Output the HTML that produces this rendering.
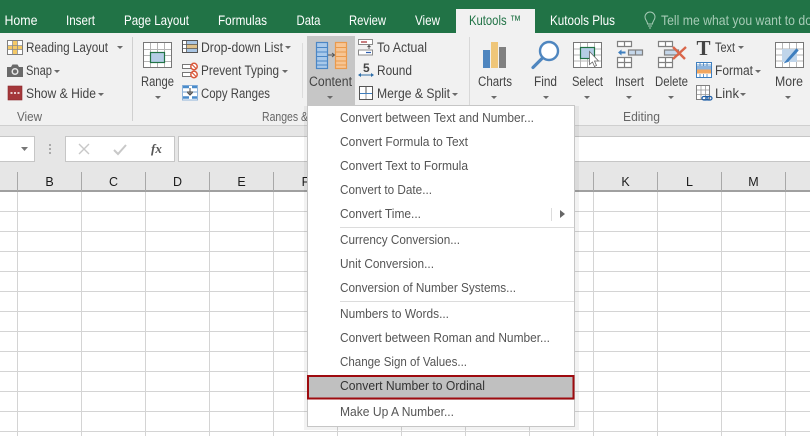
<!DOCTYPE html>
<html><head><meta charset="utf-8"><style>
html,body{margin:0;padding:0;background:#fff}
svg{display:block;font-family:"Liberation Sans",sans-serif}
.t{font-size:14px;fill:#fff}
.r{font-size:13.5px;fill:#444}
.g{font-size:13px;fill:#666}
.m{font-size:12.5px;fill:#555}
.h{font-size:12.5px;fill:#1c1c1c;text-anchor:middle}
</style></head><body>
<svg xmlns="http://www.w3.org/2000/svg" width="810" height="436" viewBox="0 0 810 436">
<rect width="810" height="436" fill="#fff"/>
<!-- title/tab bar -->
<rect width="810" height="33" fill="#217346"/>
<rect x="456" y="9" width="79" height="24" fill="#f1f1f1"/>
<text class="t" x="4.500" y="25" textLength="33" lengthAdjust="spacingAndGlyphs">Home</text>
<text class="t" x="66" y="25" textLength="29" lengthAdjust="spacingAndGlyphs">Insert</text>
<text class="t" x="124" y="25" textLength="65" lengthAdjust="spacingAndGlyphs">Page Layout</text>
<text class="t" x="218" y="25" textLength="49" lengthAdjust="spacingAndGlyphs">Formulas</text>
<text class="t" x="296.500" y="25" textLength="24" lengthAdjust="spacingAndGlyphs">Data</text>
<text class="t" x="349" y="25" textLength="37" lengthAdjust="spacingAndGlyphs">Review</text>
<text class="t" x="415" y="25" textLength="25" lengthAdjust="spacingAndGlyphs">View</text>
<text class="t" x="469" y="25" textLength="52" lengthAdjust="spacingAndGlyphs" style="fill:#217346">Kutools ™</text>
<text class="t" x="550" y="25" textLength="65" lengthAdjust="spacingAndGlyphs">Kutools Plus</text>
<text class="t" x="661" y="25" textLength="151" lengthAdjust="spacingAndGlyphs" style="fill:#a6cbb6">Tell me what you want to do</text>
<path d="M647.500 24c0-3-2.500-4-2.500-7a5 5 0 0 1 10 0c0 3-2.500 4-2.500 7zM648 26h4M649 28h2" fill="none" stroke="#a6cbb6" stroke-width="1"/>
<!-- ribbon -->
<rect y="33" width="810" height="92" fill="#f1f1f1"/>
<rect y="125" width="810" height="1" fill="#cfcfcf"/>
<rect x="132" y="37" width="1" height="84" fill="#d0d0d0"/>
<rect x="302" y="43" width="1" height="55" fill="#dcdcdc"/>
<rect x="469" y="37" width="1" height="68" fill="#d8d8d8"/>
<rect x="307" y="36" width="48" height="69" fill="#c6c6c6"/>
<!-- reading layout icon -->
<rect x="7.500" y="40.500" width="15" height="14" fill="#fff" stroke="#7f7f7f"/>
<rect x="13" y="41" width="4" height="13" fill="#f5c966"/><rect x="8" y="46" width="14" height="3.500" fill="#f5c966"/>
<path d="M12.500 41v13M17.500 41v13M8 45.500h14M8 49.500h14" stroke="#8a8a8a" stroke-width=".8" fill="none"/>
<!-- snap icon -->
<path d="M7 67h4l1.500-2.500h5L19 67h4v10H7z" fill="#6a6a6a"/><circle cx="15" cy="71.500" r="3.500" fill="#e8e8e8"/><circle cx="15" cy="71.500" r="2" fill="#6a6a6a"/>
<!-- show hide icon -->
<rect x="8" y="86" width="14" height="14" fill="#a4373a" stroke="#8c2a2d" stroke-width=".6"/>
<path d="M10.500 93h2M14 93h2M17.500 93h2" stroke="#fff" stroke-width="1.400"/>
<!-- range icon -->
<rect x="143.500" y="42.500" width="28" height="25" fill="#fff" stroke="#777"/>
<path d="M150.500 43v24M157.500 43v24M164.500 43v24M144 49.500h27M144 55.500h27M144 61.500h27" stroke="#b5b5b5" fill="none"/>
<rect x="150.500" y="52.500" width="14" height="10" fill="#b5cde6" stroke="#217346" stroke-width="1.200"/>
<!-- dropdown list -->
<rect x="182.500" y="40.500" width="15" height="12" fill="#fff" stroke="#555"/>
<rect x="187" y="44" width="10" height="5" fill="#dfc18b"/><rect x="187" y="41" width="10" height="3" fill="#a9c5e3"/><rect x="187" y="49" width="10" height="3" fill="#a9c5e3"/>
<path d="M186.500 41v11M183 44.500h14M183 48.500h14" stroke="#555" stroke-width=".8"/>
<!-- prevent typing -->
<rect x="182.500" y="64.500" width="13" height="4" fill="#fff" stroke="#777"/><rect x="182.500" y="72.500" width="13" height="4" fill="#fff" stroke="#777"/>
<circle cx="194" cy="66.500" r="3.200" fill="#fff" stroke="#d9583b" stroke-width="1.500"/><circle cx="194" cy="74.500" r="3.200" fill="#fff" stroke="#d9583b" stroke-width="1.500"/>
<path d="M192 64.500l4 4M192 72.500l4 4" stroke="#d9583b" stroke-width="1.200"/>
<!-- copy ranges -->
<rect x="182.500" y="85.500" width="15" height="14.500" fill="#fff" stroke="#8fb3d9"/>
<path d="M183 87h6M192 87h5M183 97.500h6M192 97.500h5" stroke="#4a8ccb" stroke-width="2.500"/>
<path d="M183 92h4M193 92h4" stroke="#b9cfe6" stroke-width="2"/>
<path d="M190 88v6M187.500 92.500l2.500 2.500 2.500-2.500M187 92h6" stroke="#444" fill="none"/>
<!-- content -->
<rect x="316.500" y="42.500" width="11" height="26" fill="#a9c9ea" stroke="#4a86c5" stroke-width="1.200"/>
<path d="M317 47.500h10M317 52h10M317 56.500h10M317 61h10M317 65h10" stroke="#4a86c5"/>
<rect x="335.500" y="42.500" width="11" height="26" fill="#f7c593" stroke="#ea9a4c" stroke-width="1.200"/>
<path d="M336 47.500h10M336 52h10M336 56.500h10M336 61h10M336 65h10" stroke="#ea9a4c"/>
<path d="M328 55h6M332 53l2.500 2-2.500 2" stroke="#555" fill="none"/>
<!-- to actual -->
<rect x="358.500" y="39.500" width="14" height="5" fill="#fff" stroke="#8a8a8a"/><path d="M361 42h6" stroke="#a4282c" stroke-width="1.200"/>
<rect x="358.500" y="50" width="14" height="5" fill="#fff" stroke="#8a8a8a"/><path d="M366 52.500h5" stroke="#2f5fb0" stroke-width="1.200"/>
<path d="M369 49v-3M367.500 47l1.500-1.500 1.500 1.500" stroke="#333" fill="none" stroke-width=".8"/>
<!-- round -->
<text x="363" y="72" style="font-size:12px;font-weight:bold;fill:#444">5</text>
<path d="M359 75h14" stroke="#2f6ea8" stroke-width="1"/><path d="M358 75l3-2v4zM374 75l-3-2v4z" fill="#2f6ea8"/>
<!-- merge -->
<rect x="359.500" y="86.500" width="13" height="13" fill="#fff" stroke="#555"/><path d="M366 87v6" stroke="#555"/><path d="M366 94v5" stroke="#9b9b9b"/><path d="M360 93.500h12" stroke="#3f7fbf"/>
<!-- charts -->
<rect x="483" y="50" width="7" height="18" fill="#4f86bf"/><rect x="491" y="42" width="7" height="26" fill="#efc679"/><rect x="499" y="47" width="7" height="21" fill="#808080"/>
<!-- find -->
<circle cx="549" cy="51" r="9" fill="#fff" stroke="#4f86bf" stroke-width="2.400"/>
<path d="M542.500 58L533 67.500" stroke="#4f86bf" stroke-width="3.200" stroke-linecap="round"/>
<!-- select -->
<rect x="573.500" y="42.500" width="28" height="25" fill="#fff" stroke="#777"/>
<path d="M580.500 43v24M587.500 43v24M594.500 43v24M574 49h27M574 55h27M574 61h27" stroke="#b5b5b5" fill="none"/>
<rect x="580.500" y="47.500" width="14" height="11" fill="#b5cde6" stroke="#217346" stroke-width="1.200"/>
<path d="M589.500 51.500v13l3-2.500 2 4.500 2-1-2-4.500h4z" fill="#fff" stroke="#666" stroke-width=".8"/>
<!-- insert -->
<g fill="#fff" stroke="#808080" stroke-width="1.200"><path d="M617.500 41.500h14v5h-14zM624.500 41.500v5M617.500 57.500h14v10h-14zM617.500 62.500h14M624.500 57.500v10"/><path d="M628.500 50h14v5h-14z" fill="#c5d7ea"/><path d="M635.500 50v5"/></g>
<path d="M618 52.500l3.500-3v2h4v2h-4v2z" fill="#3f7fbf"/>
<!-- delete -->
<g fill="#fff" stroke="#808080" stroke-width="1.200"><path d="M658.500 41.500h14v5h-14zM665.500 41.500v5M658.500 57.500h14v10h-14zM658.500 62.500h14M665.500 57.500v10"/><path d="M664.500 50h14v5h-14z" fill="#c5d7ea"/></g>
<path d="M673 47l12 12M686 47l-13 12" stroke="#d9664a" stroke-width="2.400" fill="none"/>
<!-- T -->
<text x="696.500" y="55" style="font-family:'Liberation Serif',serif;font-size:21px;font-weight:bold;fill:#444">T</text>
<!-- format -->
<rect x="696.500" y="62.500" width="15" height="15" fill="#fff" stroke="#3f7fbf"/>
<rect x="697" y="66" width="14" height="3.500" fill="#8db4dd"/><rect x="697" y="69.500" width="14" height="4" fill="#f2a65e"/>
<path d="M697 65h14M700 63v3M703.500 63v3M707 63v3M700 74v3M703.500 74v3M707 74v3" stroke="#3f7fbf" stroke-width=".8"/>
<!-- link -->
<rect x="696.500" y="85.500" width="13" height="14" fill="#fff" stroke="#808080"/><path d="M701 86v13M705.500 86v13M697 90h12M697 94.500h12" stroke="#999" stroke-width=".8"/>
<rect x="702" y="96.500" width="6" height="3.500" rx="1.700" fill="none" stroke="#1f5fa8" stroke-width="1.200"/><rect x="706" y="96.500" width="6" height="3.500" rx="1.700" fill="none" stroke="#1f5fa8" stroke-width="1.200"/>
<!-- more -->
<rect x="775.500" y="42.500" width="28" height="25" fill="#fff" stroke="#777"/>
<path d="M782.500 43v24M789.500 43v24M796.500 43v24M776 49h27M776 55h27M776 61h27" stroke="#b5b5b5" fill="none"/>
<rect x="782" y="49" width="15" height="13" fill="#c0d5ea"/>
<path d="M787 60l-2 2.500 3-1 10-11-1.500-1.500z" fill="#3f7fbf" stroke="#3f7fbf"/>
<!-- arrows -->
<path fill="#6a6a6a" d="M117 46h6l-3 3zM54 70h6l-3 3zM98 93h6l-3 3zM155 96h6l-3 3zM285 46h6l-3 3zM282 70h6l-3 3zM327 96h6l-3 3zM452 93h6l-3 3zM491 96h6l-3 3zM543 96h6l-3 3zM584 96h6l-3 3zM626 96h6l-3 3zM668 96h6l-3 3zM738 46h6l-3 3zM755 70h6l-3 3zM740 93h6l-3 3zM785 96h6l-3 3z"/>
<!-- ribbon labels -->
<text class="r" x="26" y="52" textLength="82" lengthAdjust="spacingAndGlyphs">Reading Layout</text>
<text class="r" x="26" y="75" textLength="26" lengthAdjust="spacingAndGlyphs">Snap</text>
<text class="r" x="26" y="98" textLength="70" lengthAdjust="spacingAndGlyphs">Show &amp; Hide</text>
<text class="g" x="17" y="121" textLength="25" lengthAdjust="spacingAndGlyphs">View</text>
<text class="r" x="141" y="86" textLength="33" lengthAdjust="spacingAndGlyphs">Range</text>
<text class="r" x="201" y="52" textLength="82" lengthAdjust="spacingAndGlyphs">Drop-down List</text>
<text class="r" x="201" y="75" textLength="78" lengthAdjust="spacingAndGlyphs">Prevent Typing</text>
<text class="r" x="201" y="98" textLength="69" lengthAdjust="spacingAndGlyphs">Copy Ranges</text>
<text class="g" x="262" y="121" textLength="46" lengthAdjust="spacingAndGlyphs">Ranges &amp;</text>
<text class="r" x="309" y="86" textLength="43" lengthAdjust="spacingAndGlyphs">Content</text>
<text class="r" x="377" y="52" textLength="50" lengthAdjust="spacingAndGlyphs">To Actual</text>
<text class="r" x="377" y="75" textLength="35" lengthAdjust="spacingAndGlyphs">Round</text>
<text class="r" x="377" y="98" textLength="73" lengthAdjust="spacingAndGlyphs">Merge &amp; Split</text>
<text class="r" x="478" y="86" textLength="34" lengthAdjust="spacingAndGlyphs">Charts</text>
<text class="r" x="534" y="86" textLength="23" lengthAdjust="spacingAndGlyphs">Find</text>
<text class="r" x="572" y="86" textLength="31" lengthAdjust="spacingAndGlyphs">Select</text>
<text class="r" x="615" y="86" textLength="29" lengthAdjust="spacingAndGlyphs">Insert</text>
<text class="r" x="655" y="86" textLength="33" lengthAdjust="spacingAndGlyphs">Delete</text>
<text class="r" x="715" y="52" textLength="20" lengthAdjust="spacingAndGlyphs">Text</text>
<text class="r" x="715" y="75" textLength="38" lengthAdjust="spacingAndGlyphs">Format</text>
<text class="r" x="715" y="98" textLength="24" lengthAdjust="spacingAndGlyphs">Link</text>
<text class="r" x="775" y="86" textLength="28" lengthAdjust="spacingAndGlyphs">More</text>
<text class="g" x="623" y="121" textLength="37" lengthAdjust="spacingAndGlyphs">Editing</text>
<!-- formula bar -->
<rect y="126" width="810" height="36" fill="#e6e6e6"/>
<rect x="-2" y="136.500" width="36.500" height="25" fill="#fff" stroke="#c6c6c6"/>
<path d="M21 147h7l-3.500 4z" fill="#777"/>
<path d="M50 144v2M50 148v2M50 152v2" stroke="#aaa" stroke-width="2"/>
<rect x="65.500" y="136.500" width="109" height="25" fill="#fff" stroke="#c6c6c6"/>
<rect x="178.500" y="136.500" width="640" height="25" fill="#fff" stroke="#c6c6c6"/>
<path d="M79 144l10 10M89 144l-10 10" stroke="#c8c8c8" stroke-width="1.400"/>
<path d="M114 150l4 4 8-9" stroke="#c8c8c8" stroke-width="2" fill="none"/>
<text x="151" y="153" style="font-family:'Liberation Serif',serif;font-style:italic;font-weight:bold;font-size:13px;fill:#555">fx</text>
<!-- column headers -->
<rect y="162" width="810" height="29" fill="#e6e6e6"/>
<rect y="190" width="810" height="2" fill="#a0a0a0"/>
<path d="M17.500 172v19M81.500 172v19M145.500 172v19M209.500 172v19M273.500 172v19M337.500 172v19M593.500 172v19M657.500 172v19M721.500 172v19M785.500 172v19" stroke="#a8a8a8"/>
<text class="h" x="49.500" y="186">B</text><text class="h" x="113.500" y="186">C</text><text class="h" x="177.500" y="186">D</text><text class="h" x="241.500" y="186">E</text><text class="h" x="305.500" y="186">F</text><text class="h" x="625.500" y="186">K</text><text class="h" x="689.500" y="186">L</text><text class="h" x="753.500" y="186">M</text>
<!-- grid -->
<path d="M17.500 192V436M81.500 192V436M145.500 192V436M209.500 192V436M273.500 192V436M337.500 192V436M401.500 192V436M465.500 192V436M529.500 192V436M593.500 192V436M657.500 192V436M721.500 192V436M785.500 192V436M0 211.500H810M0 231.500H810M0 251.500H810M0 271.500H810M0 291.500H810M0 311.500H810M0 331.500H810M0 351.500H810M0 371.500H810M0 391.500H810M0 411.500H810M0 431.500H810" stroke="#d4d4d4" fill="none"/>
<!-- menu -->
<rect x="304" y="106" width="275" height="324" fill="#000" opacity=".05"/>
<rect x="307.500" y="105.500" width="267" height="321" fill="#fff" stroke="#c6c6c6"/>
<path d="M340 227.500h234M340 301.500h234M340 399.500h234" stroke="#dcdcdc"/>
<path d="M551.500 208v13" stroke="#dcdcdc"/><path d="M560 210v8l5-4z" fill="#666"/>
<rect x="308" y="376" width="265.500" height="22.500" fill="#c0c0c0" stroke="#9e0b0f" stroke-width="2"/>
<text class="m" x="340" y="122" textLength="194" lengthAdjust="spacingAndGlyphs">Convert between Text and Number...</text>
<text class="m" x="340" y="146" textLength="128" lengthAdjust="spacingAndGlyphs">Convert Formula to Text</text>
<text class="m" x="340" y="170" textLength="128" lengthAdjust="spacingAndGlyphs">Convert Text to Formula</text>
<text class="m" x="340" y="194" textLength="92" lengthAdjust="spacingAndGlyphs">Convert to Date...</text>
<text class="m" x="340" y="218" textLength="81" lengthAdjust="spacingAndGlyphs">Convert Time...</text>
<text class="m" x="340" y="244" textLength="120" lengthAdjust="spacingAndGlyphs">Currency Conversion...</text>
<text class="m" x="340" y="268" textLength="94" lengthAdjust="spacingAndGlyphs">Unit Conversion...</text>
<text class="m" x="340" y="292" textLength="176" lengthAdjust="spacingAndGlyphs">Conversion of Number Systems...</text>
<text class="m" x="340" y="318" textLength="109" lengthAdjust="spacingAndGlyphs">Numbers to Words...</text>
<text class="m" x="340" y="342" textLength="210" lengthAdjust="spacingAndGlyphs">Convert between Roman and Number...</text>
<text class="m" x="340" y="366" textLength="127" lengthAdjust="spacingAndGlyphs">Change Sign of Values...</text>
<text class="m" x="340" y="390" textLength="145" lengthAdjust="spacingAndGlyphs" style="fill:#333">Convert Number to Ordinal</text>
<text class="m" x="340" y="416" textLength="114" lengthAdjust="spacingAndGlyphs">Make Up A Number...</text>
</svg>
</body></html>
